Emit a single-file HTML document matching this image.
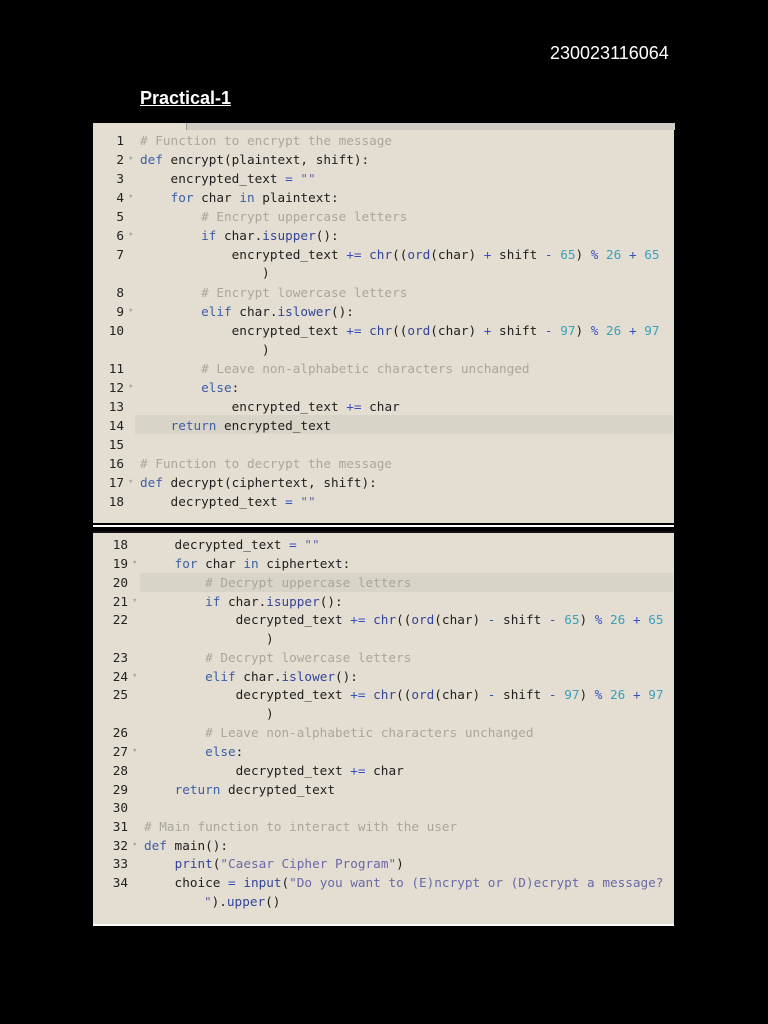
<!DOCTYPE html>
<html><head><meta charset="utf-8"><style>
body{margin:0;width:768px;height:1024px;background:#000;position:relative;overflow:hidden;font-family:"DejaVu Sans Mono","Liberation Mono",monospace;}
.hd{position:absolute;font-family:"Liberation Sans",sans-serif;color:#fff;}
.p{position:absolute;left:93px;width:581px;background:#e3ded1;}
.l{position:absolute;height:19px;line-height:19px;font-size:12.7px;white-space:pre;color:#1e1e1e;}
.n{position:absolute;height:19px;line-height:19px;font-size:12.7px;text-align:right;color:#222;}
.c{color:#aaa69c}.k{color:#3c5ea6}.b{color:#34449a}.s{color:#6a68a8}.o{color:#3550c0}.d{color:#3aa0bb}
.hl{position:absolute;background:#d9d4c8;height:19px;}
.ar{color:#aaa;font-size:9px}
</style></head><body>
<div class="hd" style="left:550px;top:43px;font-size:18px">230023116064</div>
<div class="hd" style="left:140px;top:88px;font-size:18px;font-weight:bold;text-decoration:underline">Practical-1</div>

<div class="p" style="top:123px;height:400px"></div>
<div style="position:absolute;left:186px;top:123px;width:488px;height:7px;background:#cfccc5;border-left:1px solid #999"></div>
<div style="position:absolute;left:93px;top:525px;width:581px;height:2px;background:#fff"></div>
<div class="hl" style="left:135px;top:415px;width:538px"></div>

<div class="p" style="top:531px;height:391px;border-top:2px solid #111"></div>
<div style="position:absolute;left:93px;top:924px;width:581px;height:2px;background:#fff"></div>
<div class="hl" style="left:140px;top:573px;width:533px"></div>

<!-- panel 1 -->
<div class="n" style="left:95px;width:29px;top:131px">1</div>
<div class="l" style="left:140px;top:131px"><span class="c"># Function to encrypt the message</span></div>
<div class="n" style="left:95px;width:29px;top:150px">2</div><div class="l ar" style="left:128px;top:150px">▾</div>
<div class="l" style="left:140px;top:150px"><span class="k">def</span> encrypt(plaintext, shift):</div>
<div class="n" style="left:95px;width:29px;top:169px">3</div>
<div class="l" style="left:140px;top:169px">    encrypted_text <span class="o">=</span> <span class="s">""</span></div>
<div class="n" style="left:95px;width:29px;top:188px">4</div><div class="l ar" style="left:128px;top:188px">▾</div>
<div class="l" style="left:140px;top:188px">    <span class="k">for</span> char <span class="k">in</span> plaintext:</div>
<div class="n" style="left:95px;width:29px;top:207px">5</div>
<div class="l" style="left:140px;top:207px">        <span class="c"># Encrypt uppercase letters</span></div>
<div class="n" style="left:95px;width:29px;top:226px">6</div><div class="l ar" style="left:128px;top:226px">▾</div>
<div class="l" style="left:140px;top:226px">        <span class="k">if</span> char.<span class="b">isupper</span>():</div>
<div class="n" style="left:95px;width:29px;top:245px">7</div>
<div class="l" style="left:140px;top:245px">            encrypted_text <span class="o">+=</span> <span class="b">chr</span>((<span class="b">ord</span>(char) <span class="o">+</span> shift <span class="o">-</span> <span class="d">65</span>) <span class="o">%</span> <span class="d">26</span> <span class="o">+</span> <span class="d">65</span></div>
<div class="l" style="left:262px;top:263px">)</div>
<div class="n" style="left:95px;width:29px;top:283px">8</div>
<div class="l" style="left:140px;top:283px">        <span class="c"># Encrypt lowercase letters</span></div>
<div class="n" style="left:95px;width:29px;top:302px">9</div><div class="l ar" style="left:128px;top:302px">▾</div>
<div class="l" style="left:140px;top:302px">        <span class="k">elif</span> char.<span class="b">islower</span>():</div>
<div class="n" style="left:95px;width:29px;top:321px">10</div>
<div class="l" style="left:140px;top:321px">            encrypted_text <span class="o">+=</span> <span class="b">chr</span>((<span class="b">ord</span>(char) <span class="o">+</span> shift <span class="o">-</span> <span class="d">97</span>) <span class="o">%</span> <span class="d">26</span> <span class="o">+</span> <span class="d">97</span></div>
<div class="l" style="left:262px;top:340px">)</div>
<div class="n" style="left:95px;width:29px;top:359px">11</div>
<div class="l" style="left:140px;top:359px">        <span class="c"># Leave non-alphabetic characters unchanged</span></div>
<div class="n" style="left:95px;width:29px;top:378px">12</div><div class="l ar" style="left:128px;top:378px">▾</div>
<div class="l" style="left:140px;top:378px">        <span class="k">else</span>:</div>
<div class="n" style="left:95px;width:29px;top:397px">13</div>
<div class="l" style="left:140px;top:397px">            encrypted_text <span class="o">+=</span> char</div>
<div class="n" style="left:95px;width:29px;top:416px">14</div>
<div class="l" style="left:140px;top:416px">    <span class="k">return</span> encrypted_text</div>
<div class="n" style="left:95px;width:29px;top:435px">15</div>
<div class="n" style="left:95px;width:29px;top:454px">16</div>
<div class="l" style="left:140px;top:454px"><span class="c"># Function to decrypt the message</span></div>
<div class="n" style="left:95px;width:29px;top:473px">17</div><div class="l ar" style="left:128px;top:473px">▾</div>
<div class="l" style="left:140px;top:473px"><span class="k">def</span> decrypt(ciphertext, shift):</div>
<div class="n" style="left:95px;width:29px;top:492px">18</div>
<div class="l" style="left:140px;top:492px">    decrypted_text <span class="o">=</span> <span class="s">""</span></div>

<!-- panel 2 -->
<div class="n" style="left:95px;width:33px;top:535px">18</div>
<div class="l" style="left:144px;top:535px">    decrypted_text <span class="o">=</span> <span class="s">""</span></div>
<div class="n" style="left:95px;width:33px;top:554px">19</div><div class="l ar" style="left:132px;top:554px">▾</div>
<div class="l" style="left:144px;top:554px">    <span class="k">for</span> char <span class="k">in</span> ciphertext:</div>
<div class="n" style="left:95px;width:33px;top:573px">20</div>
<div class="l" style="left:144px;top:573px">        <span class="c"># Decrypt uppercase letters</span></div>
<div class="n" style="left:95px;width:33px;top:592px">21</div><div class="l ar" style="left:132px;top:592px">▾</div>
<div class="l" style="left:144px;top:592px">        <span class="k">if</span> char.<span class="b">isupper</span>():</div>
<div class="n" style="left:95px;width:33px;top:610px">22</div>
<div class="l" style="left:144px;top:610px">            decrypted_text <span class="o">+=</span> <span class="b">chr</span>((<span class="b">ord</span>(char) <span class="o">-</span> shift <span class="o">-</span> <span class="d">65</span>) <span class="o">%</span> <span class="d">26</span> <span class="o">+</span> <span class="d">65</span></div>
<div class="l" style="left:266px;top:629px">)</div>
<div class="n" style="left:95px;width:33px;top:648px">23</div>
<div class="l" style="left:144px;top:648px">        <span class="c"># Decrypt lowercase letters</span></div>
<div class="n" style="left:95px;width:33px;top:667px">24</div><div class="l ar" style="left:132px;top:667px">▾</div>
<div class="l" style="left:144px;top:667px">        <span class="k">elif</span> char.<span class="b">islower</span>():</div>
<div class="n" style="left:95px;width:33px;top:685px">25</div>
<div class="l" style="left:144px;top:685px">            decrypted_text <span class="o">+=</span> <span class="b">chr</span>((<span class="b">ord</span>(char) <span class="o">-</span> shift <span class="o">-</span> <span class="d">97</span>) <span class="o">%</span> <span class="d">26</span> <span class="o">+</span> <span class="d">97</span></div>
<div class="l" style="left:266px;top:704px">)</div>
<div class="n" style="left:95px;width:33px;top:723px">26</div>
<div class="l" style="left:144px;top:723px">        <span class="c"># Leave non-alphabetic characters unchanged</span></div>
<div class="n" style="left:95px;width:33px;top:742px">27</div><div class="l ar" style="left:132px;top:742px">▾</div>
<div class="l" style="left:144px;top:742px">        <span class="k">else</span>:</div>
<div class="n" style="left:95px;width:33px;top:761px">28</div>
<div class="l" style="left:144px;top:761px">            decrypted_text <span class="o">+=</span> char</div>
<div class="n" style="left:95px;width:33px;top:780px">29</div>
<div class="l" style="left:144px;top:780px">    <span class="k">return</span> decrypted_text</div>
<div class="n" style="left:95px;width:33px;top:798px">30</div>
<div class="n" style="left:95px;width:33px;top:817px">31</div>
<div class="l" style="left:144px;top:817px"><span class="c"># Main function to interact with the user</span></div>
<div class="n" style="left:95px;width:33px;top:836px">32</div><div class="l ar" style="left:132px;top:836px">▾</div>
<div class="l" style="left:144px;top:836px"><span class="k">def</span> main():</div>
<div class="n" style="left:95px;width:33px;top:854px">33</div>
<div class="l" style="left:144px;top:854px">    <span class="b">print</span>(<span class="s">"Caesar Cipher Program"</span>)</div>
<div class="n" style="left:95px;width:33px;top:873px">34</div>
<div class="l" style="left:144px;top:873px">    choice <span class="o">=</span> <span class="b">input</span>(<span class="s">"Do you want to (E)ncrypt or (D)ecrypt a message?</span></div>
<div class="l" style="left:204px;top:892px"><span class="s">"</span>).<span class="b">upper</span>()</div>
</body></html>
